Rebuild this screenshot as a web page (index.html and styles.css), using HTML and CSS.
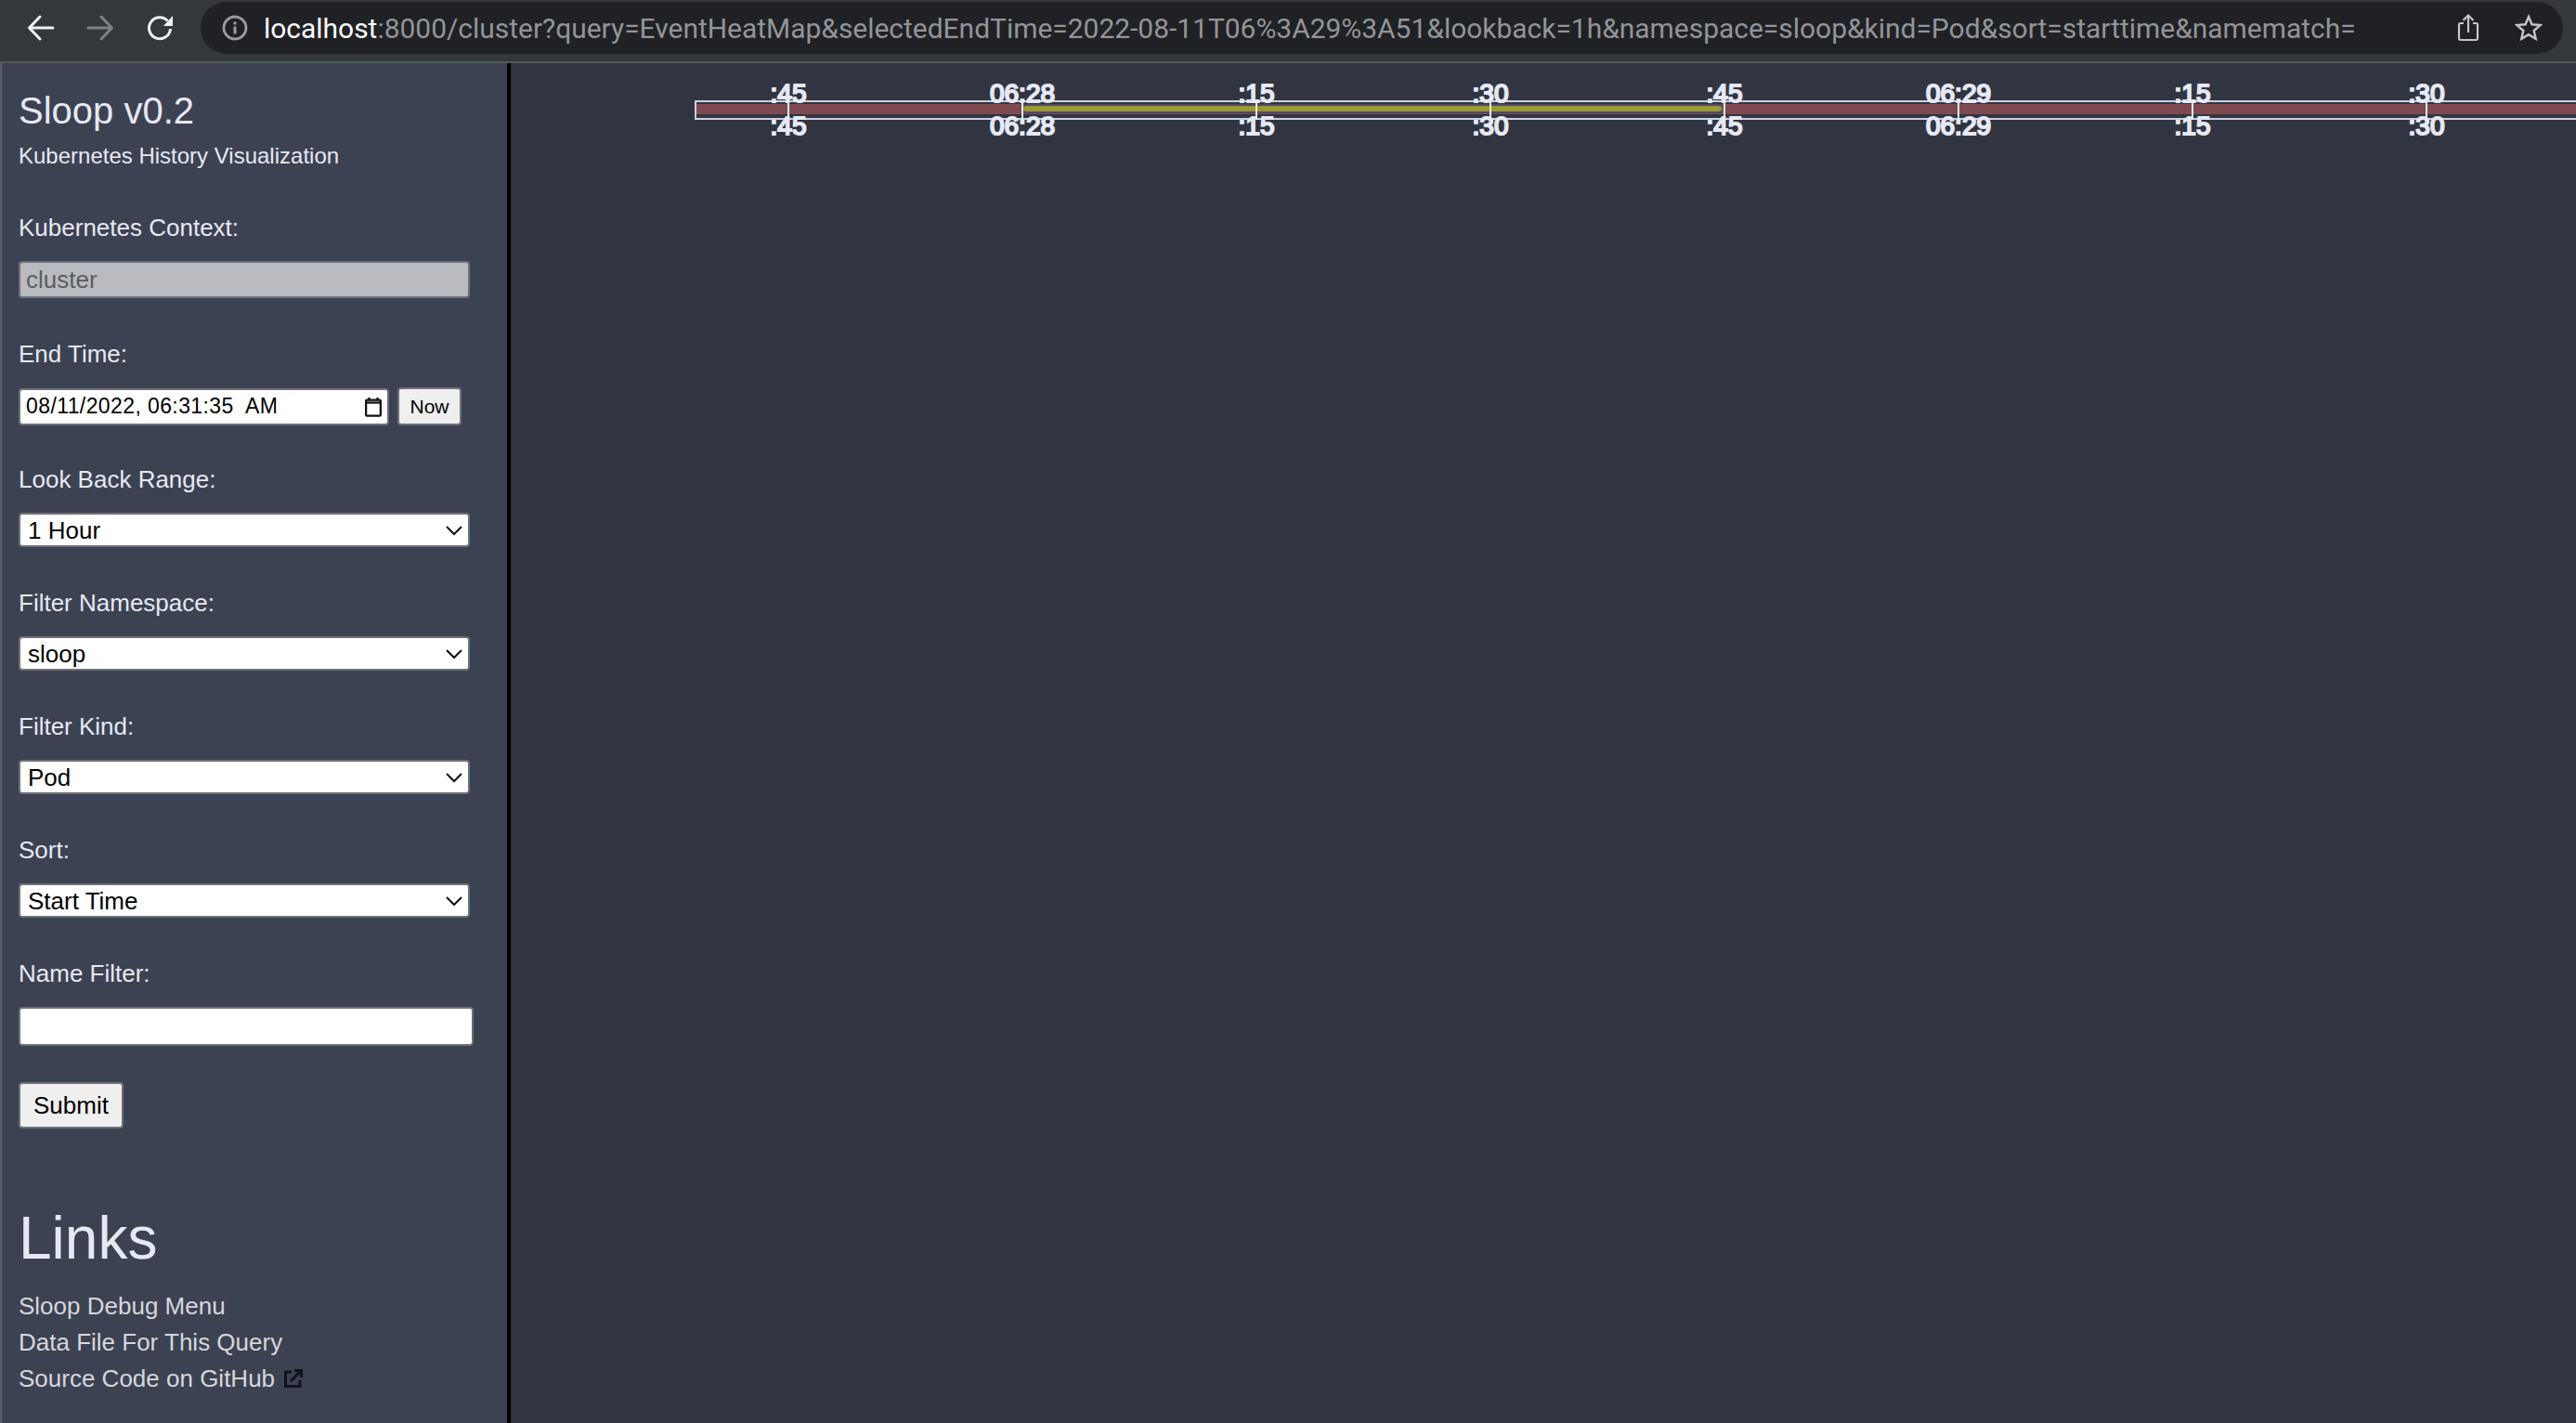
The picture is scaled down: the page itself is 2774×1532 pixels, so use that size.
FILE: index.html
```html
<!DOCTYPE html>
<html lang="en">
<head>
    <meta charset="UTF-8">
    <title>Sloop</title>
    <link rel="stylesheet" href="styles.css">
</head>
<body>
    <!-- Browser toolbar -->
    <header class="toolbar">
        <svg class="nav-icon" viewBox="0 0 32 32"><path d="M29 16H5M15 4 3.500 16 15 28" fill="none" stroke="#eff0f1" stroke-width="3" stroke-linecap="round" stroke-linejoin="round"/></svg>
        <svg class="nav-icon" viewBox="0 0 32 32"><path d="M3 16h24M17 4l11.500 12L17 28" fill="none" stroke="#7f8284" stroke-width="3" stroke-linecap="round" stroke-linejoin="round"/></svg>
        <svg class="nav-icon" viewBox="0 0 32 32"><path d="M24.500 8.500A11.500 11.500 0 1 0 27.500 17" fill="none" stroke="#eff0f1" stroke-width="3"/><path d="M20 14h10V3z" fill="#eff0f1"/></svg>
        <div class="omnibox">
            <svg class="info-icon" viewBox="0 0 28 28"><circle cx="14" cy="14" r="12" fill="none" stroke="#9a9da0" stroke-width="2.800"/><path d="M14 12.500v8M14 7.500v3" stroke="#9a9da0" stroke-width="3"/></svg>
            <div class="url"><span class="host">localhost</span>:8000/cluster?query=EventHeatMap&amp;selectedEndTime=2022-08-11T06%3A29%3A51&amp;lookback=1h&amp;namespace=sloop&amp;kind=Pod&amp;sort=starttime&amp;namematch=</div>
            <svg class="share-icon" viewBox="0 0 24 30"><path d="M7 10H3.500A1.500 1.500 0 0 0 2 11.500v15A1.500 1.500 0 0 0 3.500 28h17a1.500 1.500 0 0 0 1.500-1.500v-15a1.500 1.500 0 0 0-1.500-1.500H17M12 20V2M6.500 7 12 1.500 17.500 7" fill="none" stroke="#c4c6c8" stroke-width="2.200"/></svg>
            <svg class="star-icon" viewBox="0 0 30 30"><path d="m15 3 3.500 8.300 9 .8-6.800 5.900 2 8.800-7.700-4.600-7.700 4.600 2-8.800-6.800-5.900 9-.8z" fill="none" stroke="#c4c6c8" stroke-width="2.400"/></svg>
        </div>
    </header>

    <div class="page">
        <aside class="sidebar">
            <h1>Sloop v0.2</h1>
            <p class="subtitle">Kubernetes History Visualization</p>

            <form class="filters">
                <div class="form-group">
                    <label for="context">Kubernetes Context:</label>
                    <input type="text" id="context" class="context-input" value="cluster" disabled>
                </div>

                <div class="form-group time-group">
                    <label for="endtime">End Time:</label>
                    <div class="time-row">
                        <div class="time-input" id="endtime">
                            <span>08/11/2022, 06:31:35&nbsp; AM</span>
                            <svg class="calendar-icon" viewBox="0 0 16 20"><path d="M4 1v3M12 1v3" stroke="#111" stroke-width="2"/><rect x="1" y="3.500" width="14" height="15" rx="1" fill="none" stroke="#111" stroke-width="2"/><path d="M1 6h14" stroke="#111" stroke-width="2"/></svg>
                        </div>
                        <button type="button" class="now-btn">Now</button>
                    </div>
                </div>

                <div class="form-group">
                    <label for="lookback">Look Back Range:</label>
                    <div class="select-box" id="lookback">1 Hour<svg class="chevron" viewBox="0 0 18 12"><path d="m1 2 8 8 8-8" fill="none" stroke="#111" stroke-width="2"/></svg></div>
                </div>

                <div class="form-group">
                    <label for="namespace">Filter Namespace:</label>
                    <div class="select-box" id="namespace">sloop<svg class="chevron" viewBox="0 0 18 12"><path d="m1 2 8 8 8-8" fill="none" stroke="#111" stroke-width="2"/></svg></div>
                </div>

                <div class="form-group">
                    <label for="kind">Filter Kind:</label>
                    <div class="select-box" id="kind">Pod<svg class="chevron" viewBox="0 0 18 12"><path d="m1 2 8 8 8-8" fill="none" stroke="#111" stroke-width="2"/></svg></div>
                </div>

                <div class="form-group">
                    <label for="sort">Sort:</label>
                    <div class="select-box" id="sort">Start Time<svg class="chevron" viewBox="0 0 18 12"><path d="m1 2 8 8 8-8" fill="none" stroke="#111" stroke-width="2"/></svg></div>
                </div>

                <div class="form-group name-group">
                    <label for="namematch">Name Filter:</label>
                    <input type="text" id="namematch" class="name-input">
                </div>

                <button type="button" class="submit-btn">Submit</button>
            </form>

            <h2>Links</h2>
            <ul class="links">
                <li><a href="#">Sloop Debug Menu</a></li>
                <li><a href="#">Data File For This Query</a></li>
                <li><a href="#">Source Code on GitHub</a>
                    <svg class="external-icon" viewBox="0 0 20 20"><path d="M8 3H1.500v15.500H17V12" fill="none" stroke="#11131b" stroke-width="3"/><path d="M7 13 17 3M11 1.500h7.500V9" fill="none" stroke="#11131b" stroke-width="3"/></svg>
                </li>
            </ul>
        </aside>

        <!-- Heat map axis -->
        <main class="chart">
            <svg class="heatmap" width="2224" height="100" viewBox="550 68 2224 100">
                <rect x="750" y="112" width="2030" height="11" fill="#7f4a4f"/>
                <rect x="1102" y="112" width="752" height="10" fill="#4a4a68"/>
                <rect x="1102" y="114" width="752" height="6" rx="3" fill="#9c9a30"/>
                <rect class="frame" x="749" y="109" width="2040" height="19"/>
                <g class="ticks">
                    <path d="M849 108v21M1101 108v21M1353 108v21M1605 108v21M1857 108v21M2109 108v21M2361 108v21M2613 108v21"/>
                </g>
                <g class="labels">
                    <text x="849" y="110">:45</text><text x="849" y="145">:45</text>
                    <text x="1101" y="110">06:28</text><text x="1101" y="145">06:28</text>
                    <text x="1353" y="110">:15</text><text x="1353" y="145">:15</text>
                    <text x="1605" y="110">:30</text><text x="1605" y="145">:30</text>
                    <text x="1857" y="110">:45</text><text x="1857" y="145">:45</text>
                    <text x="2109" y="110">06:29</text><text x="2109" y="145">06:29</text>
                    <text x="2361" y="110">:15</text><text x="2361" y="145">:15</text>
                    <text x="2613" y="110">:30</text><text x="2613" y="145">:30</text>
                </g>
            </svg>
        </main>
    </div>
</body>
</html>
```
FILE: styles.css
```css
html, body {
    height: 100%;
}

body {
    margin: 0;
    overflow: hidden;
    display: flex;
    flex-direction: column;
    font-family: "Liberation Sans", Arial, sans-serif;
    background-color: #313541;
}

/* Browser toolbar */
.toolbar {
    height: 68px;
    flex-shrink: 0;
    display: flex;
    align-items: center;
    padding: 2px 14px 8px 28px;
    box-sizing: border-box;
    background: #35383b;
    border-bottom: 2px solid #56595c;
}

.nav-icon {
    width: 32px;
    height: 32px;
    margin-right: 32px;
}

.omnibox {
    flex: 1;
    min-width: 0;
    height: 56px;
    margin-left: -4px;
    padding: 0 22px 0 23px;
    display: flex;
    align-items: center;
    background: #202124;
    border-radius: 28px;
}

.info-icon {
    width: 28px;
    height: 28px;
    margin-right: 17px;
}

.url {
    flex: 1;
    font-family: Roboto, sans-serif;
    font-size: 29.95px;
    color: #929599;
    white-space: nowrap;
}

.host {
    color: #fff;
}

.share-icon {
    width: 24px;
    height: 30px;
    margin-right: 38px;
}

.star-icon {
    width: 30px;
    height: 30px;
}

.page {
    flex: 1;
    display: flex;
    min-height: 0;
}

/* Sidebar */
.sidebar {
    width: 550px;
    flex-shrink: 0;
    box-sizing: border-box;
    padding: 28px 0 0 18px;
    background: #3d4252;
    border-left: 2px solid #5a5e6c;
    border-right: 4px solid #000;
    color: #e6e9f4;
}

.sidebar h1 {
    margin: 0;
    font-size: 40px;
    font-weight: normal;
    line-height: 46px;
}

.subtitle {
    margin: 12px 0 0;
    font-size: 24px;
    line-height: 28px;
}

.filters {
    margin-top: 48px;
}

.form-group {
    margin-bottom: 45px;
}

.time-group {
    margin-bottom: 43px;
}

.name-group {
    margin-bottom: 39px;
}

label {
    display: block;
    margin-bottom: 21px;
    font-size: 26px;
    line-height: 30px;
}

input, .select-box, .time-input {
    box-sizing: border-box;
    display: block;
    margin: 0;
    font-family: "Liberation Sans", Arial, sans-serif;
    color: #000;
    background: #fff;
    border: 2px solid #6f7178;
    border-radius: 4px;
}

.context-input {
    width: 486px;
    height: 40px;
    padding: 1px 6px 0;
    font-size: 26px;
    color: #5b5c62;
    background: #b9bbc1;
}

.time-row {
    display: flex;
    align-items: center;
    gap: 9px;
}

.time-input {
    width: 399px;
    height: 40px;
    padding: 0 6px;
    display: flex;
    align-items: center;
    justify-content: space-between;
    font-size: 23px;
    letter-spacing: 0.4px;
}

.calendar-icon {
    width: 18px;
    height: 24px;
}

.now-btn {
    width: 69px;
    height: 41px;
    padding: 0;
    font-family: "Liberation Sans", Arial, sans-serif;
    font-size: 21px;
    color: #000;
    background: #efefef;
    border: 2px solid #6f7178;
    border-radius: 4px;
}

.select-box {
    width: 486px;
    height: 37px;
    padding: 1px 6px 0 8px;
    display: flex;
    align-items: center;
    justify-content: space-between;
    font-size: 26px;
}

.chevron {
    width: 18px;
    height: 12px;
}

.name-input {
    width: 490px;
    height: 42px;
}

.submit-btn {
    width: 113px;
    height: 50px;
    padding: 0;
    font-family: "Liberation Sans", Arial, sans-serif;
    font-size: 26px;
    color: #000;
    background: #efefef;
    border: 2px solid #6f7178;
    border-radius: 4px;
}

.sidebar h2 {
    margin: 81px 0 0;
    font-size: 64px;
    font-weight: normal;
    line-height: 74px;
}

.links {
    margin: 17px 0 0;
    padding: 0;
    list-style: none;
    font-size: 26px;
    line-height: 39px;
}

.links a {
    color: #d6d7dc;
    text-decoration: none;
}

.external-icon {
    width: 20px;
    height: 20px;
    margin-left: 3px;
    vertical-align: -1px;
}

/* Heat map */
.chart {
    flex: 1;
    min-width: 0;
    overflow: hidden;
    background: #313541;
}

.heatmap {
    display: block;
}

.frame {
    fill: none;
    stroke: #ccd0e0;
    stroke-width: 2;
}

.ticks path {
    fill: none;
    stroke: #e6e9f4;
    stroke-width: 2;
}

.labels text {
    font-family: "Liberation Sans", Arial, sans-serif;
    font-size: 28px;
    text-anchor: middle;
    fill: #e6e9f4;
    stroke: #e6e9f4;
    stroke-width: 2;
}
```
